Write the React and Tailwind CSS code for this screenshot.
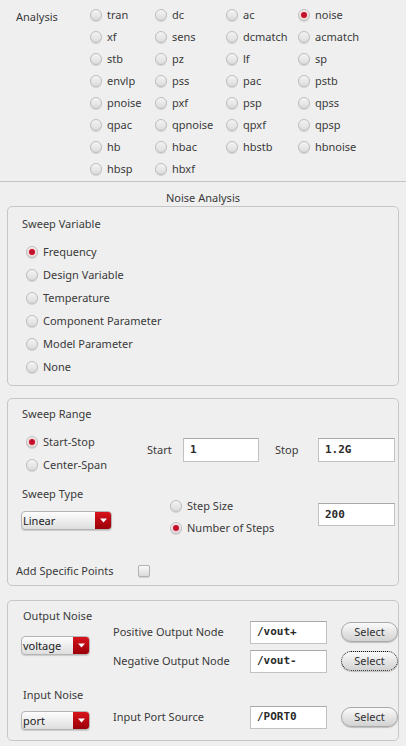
const ANALYSES = [
  'tran', 'dc', 'ac', 'noise',
  'xf', 'sens', 'dcmatch', 'acmatch',
  'stb', 'pz', 'lf', 'sp',
  'envlp', 'pss', 'pac', 'pstb',
  'pnoise', 'pxf', 'psp', 'qpss',
  'qpac', 'qpnoise', 'qpxf', 'qpsp',
  'hb', 'hbac', 'hbstb', 'hbnoise',
  'hbsp', 'hbxf',
]

const SWEEP_VARS = ['Frequency', 'Design Variable', 'Temperature', 'Component Parameter', 'Model Parameter', 'None']

function Radio({ checked }) {
  return (
    <div className="w-[12px] h-[12px] flex-shrink-0 rounded-full border border-[#bdbdbd] bg-gradient-to-b from-[#f4f4f4] to-[#dcdcdc] shadow-[0_1px_0_rgba(0,0,0,0.12)] flex items-center justify-center">
      {checked && <div className="w-[6px] h-[6px] rounded-full bg-[#c0102c] shadow-[0_0_1px_1px_rgba(255,210,210,0.9)]" />}
    </div>
  )
}

function RadioRow({ label, checked, h = 'h-[23px]' }) {
  return (
    <div className={`flex items-center gap-[5px] ${h}`}>
      <Radio checked={checked} />
      <span>{label}</span>
    </div>
  )
}

function Dropdown({ value, w }) {
  return (
    <div className={`${w} h-[19px] flex rounded-[4px] border border-[#b4b4b4] bg-gradient-to-b from-[#fdfdfd] to-[#dedede] shadow-[0_1px_1px_rgba(0,0,0,0.15)] overflow-hidden`}>
      <span className="flex-1 pl-[1px] leading-[17px] text-[#222]">{value}</span>
      <div className="w-[16px] h-full bg-gradient-to-b from-[#d8141c] to-[#9a0008] flex items-center justify-center">
        <svg width="7" height="5" viewBox="0 0 7 5"><path d="M0 0.5 L7 0.5 L3.5 4.5 Z" fill="#fff" /></svg>
      </div>
    </div>
  )
}

function Field({ value, w = 'w-[77px]', h = 'h-[24px]' }) {
  return (
    <div className={`${w} ${h} flex-shrink-0 bg-white border border-[#c2c2c2] border-t-[#a8a8a8] flex items-center pl-[6px] font-['DejaVu_Sans_Mono',monospace] font-bold text-[11px] text-[#2a2a2a]`}>
      {value}
    </div>
  )
}

function SelectButton({ focused }) {
  return (
    <div className={`w-[57px] h-[20px] flex-shrink-0 rounded-full flex items-center justify-center bg-gradient-to-b from-[#fafafa] to-[#d2d2d2] shadow-[0_1px_1px_rgba(0,0,0,0.2)] text-[#333] ${focused ? 'border border-dotted border-[#111] rounded-[6px]' : 'border border-[#a9a9a9]'}`}>
      Select
    </div>
  )
}

export default function App() {
  return (
    <div className="w-[406px] h-[746px] bg-[#efefef] text-[11px] leading-[14px] text-[#3a3a3a] font-['Noto_Sans','Open_Sans',sans-serif] overflow-hidden">
      {/* analysis picker */}
      <div className="flex pt-[4px]">
        <div className="w-[90px] pl-[16px] pt-[6px]">Analysis</div>
        <div className="grid grid-cols-[65px_71px_72px_1fr]">
          {ANALYSES.map((a) => (
            <RadioRow key={a} label={a} checked={a === 'noise'} h="h-[22px]" />
          ))}
        </div>
      </div>
      <div className="h-px bg-[#c4c4c4] mt-[1px]" />
      <div className="h-[24px] pt-[9px] text-center">Noise Analysis</div>

      {/* sweep variable */}
      <div className="mx-[7px] h-[180px] border border-[#c6c6c6] rounded-[5px] pt-[10px]">
        <div className="pl-[14px]">Sweep Variable</div>
        <div className="pl-[18px] mt-[9px]">
          {SWEEP_VARS.map((v) => (
            <RadioRow key={v} label={v} checked={v === 'Frequency'} />
          ))}
        </div>
      </div>

      {/* sweep range */}
      <div className="mx-[7px] mt-[12px] h-[188px] border border-[#c6c6c6] rounded-[5px] pt-[8px]">
        <div className="pl-[14px]">Sweep Range</div>
        <div className="flex mt-[9px] h-[46px]">
          <div className="w-[139px] pl-[18px]">
            <RadioRow label="Start-Stop" checked />
            <RadioRow label="Center-Span" />
          </div>
          <div className="flex items-center h-[24px] mt-[8px]">
            <span className="w-[36px]">Start</span>
            <Field value="1" w="w-[76px]" />
            <span className="w-[43px] ml-[16px]">Stop</span>
            <Field value="1.2G" />
          </div>
        </div>
        <div className="flex h-[62px]">
          <div className="w-[162px] pl-[13px]">
            <div className="pl-[1px] mt-[11px]">Sweep Type</div>
            <div className="mt-[10px]">
              <Dropdown value="Linear" w="w-[91px]" />
            </div>
          </div>
          <div className="w-[148px] pt-[19px]">
            <RadioRow label="Step Size" h="h-[22px]" />
            <RadioRow label="Number of Steps" checked h="h-[22px]" />
          </div>
          <div className="pt-[27px]">
            <Field value="200" h="h-[23px]" />
          </div>
        </div>
        <div className="flex items-center mt-[26px] pl-[8px] h-[14px]">
          <span className="w-[122px]">Add Specific Points</span>
          <div className="w-[12px] h-[12px] rounded-[2px] border border-[#b0b0b0] bg-gradient-to-b from-[#fafafa] to-[#dadada] shadow-[0_1px_0_rgba(0,0,0,0.12)]" />
        </div>
      </div>

      {/* noise in/out */}
      <div className="mx-[7px] mt-[14px] h-[141px] border border-[#c6c6c6] rounded-[5px] flex">
        <div className="w-[105px] pl-[13px] pt-[8px]">
          <div className="pl-[2px]">Output Noise</div>
          <div className="mt-[13px]">
            <Dropdown value="voltage" w="w-[69px]" />
          </div>
          <div className="pl-[2px] mt-[33px]">Input Noise</div>
          <div className="mt-[9px]">
            <Dropdown value="port" w="w-[69px]" />
          </div>
        </div>
        <div className="pt-[19px]">
          <div className="flex items-center h-[24px]">
            <span className="w-[137px]">Positive Output Node</span>
            <Field value="/vout+" h="h-[23px]" />
            <div className="ml-[14px]"><SelectButton /></div>
          </div>
          <div className="flex items-center h-[24px] mt-[5px]">
            <span className="w-[137px]">Negative Output Node</span>
            <Field value="/vout-" h="h-[23px]" />
            <div className="ml-[14px]"><SelectButton focused /></div>
          </div>
          <div className="flex items-center h-[24px] mt-[32px]">
            <span className="w-[137px]">Input Port Source</span>
            <Field value="/PORT0" h="h-[23px]" />
            <div className="ml-[14px]"><SelectButton /></div>
          </div>
        </div>
      </div>
    </div>
  )
}
